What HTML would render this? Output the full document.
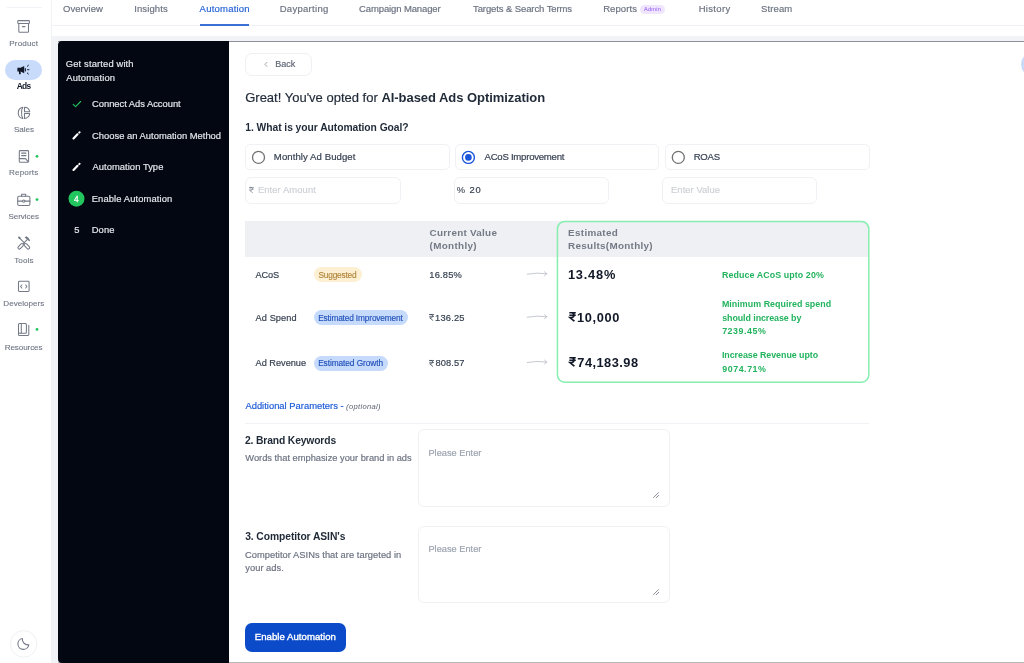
<!DOCTYPE html><html><head><meta charset="utf-8"><style>
*{margin:0;padding:0;box-sizing:border-box}
html,body{width:1024px;height:663px;overflow:hidden;background:#fff;font-family:"Liberation Sans",sans-serif}
.t{position:absolute;white-space:nowrap;line-height:1;-webkit-text-stroke-width:0.18px}
.b{position:absolute}
svg{position:absolute;overflow:visible}
#wrap{position:absolute;left:0;top:0;width:1024px;height:663px;will-change:transform;overflow:hidden}
</style></head><body><div id="wrap">
<div class="b" style="left:52px;top:36px;width:972.00px;height:627.00px;background:#f2f3f6"></div>
<div class="b" style="left:58px;top:41px;width:966.00px;height:622.00px;background:#fff"></div>
<div class="b" style="left:52px;top:25px;width:972.00px;height:1.00px;background:#eef1f5"></div>
<div class="b" style="left:51px;top:0px;width:1.00px;height:663.00px;background:#f1f2f5"></div>
<div class="b" style="left:58px;top:41px;width:966.00px;height:1.00px;background:#8d9097"></div>
<div class="b" style="left:58px;top:662px;width:966.00px;height:1.00px;background:#b5b7bb"></div>
<div class="b" style="left:58px;top:41px;width:171.00px;height:622.00px;background:#030712;border-radius:4px 0 0 4px"></div>
<div class="t" style="left:62.97px;top:4.00px;font-size:9.5px;color:#6b7280;letter-spacing:0.045px;">Overview</div>
<div class="t" style="left:134.25px;top:4.00px;font-size:9.5px;color:#6b7280;letter-spacing:0.094px;">Insights</div>
<div class="t" style="left:279.64px;top:4.00px;font-size:9.5px;color:#6b7280;letter-spacing:0.305px;">Dayparting</div>
<div class="t" style="left:359.02px;top:4.00px;font-size:9.5px;color:#6b7280;letter-spacing:-0.120px;">Campaign Manager</div>
<div class="t" style="left:473.01px;top:4.00px;font-size:9.5px;color:#6b7280;letter-spacing:-0.100px;">Targets &amp; Search Terms</div>
<div class="t" style="left:603.14px;top:4.00px;font-size:9.5px;color:#6b7280;letter-spacing:0.107px;">Reports</div>
<div class="t" style="left:698.64px;top:4.00px;font-size:9.5px;color:#6b7280;letter-spacing:0.336px;">History</div>
<div class="t" style="left:761.07px;top:4.00px;font-size:9.5px;color:#6b7280;letter-spacing:0.121px;">Stream</div>
<div class="t" style="left:199.60px;top:4.00px;font-size:9.5px;color:#2563d6;letter-spacing:0.216px;">Automation</div>
<div class="b" style="left:199.6px;top:23.5px;width:49.40px;height:2.00px;background:#3a6fd6"></div>
<div class="b" style="left:639.6px;top:4.5px;width:25.20px;height:9.00px;background:#efe6fd;border-radius:5px"></div>
<div class="t" style="left:644.00px;top:7.00px;font-size:5.6px;color:#8f4ff0;letter-spacing:0.247px;-webkit-text-stroke-width:0;">Admin</div>
<div class="b" style="left:7px;top:7.2px;width:35.00px;height:1.00px;background:#f0f2f5"></div>
<div class="b" style="left:5.3px;top:59.5px;width:37.00px;height:20.70px;background:#c8dbfb;border-radius:11px"></div>
<div class="t" style="left:9.35px;top:40.00px;font-size:8.1px;color:#6b7280;letter-spacing:0.131px;-webkit-text-stroke-width:0.1px;">Product</div>
<div class="t" style="left:13.94px;top:126.00px;font-size:8.1px;color:#6b7280;letter-spacing:-0.051px;-webkit-text-stroke-width:0.1px;">Sales</div>
<div class="t" style="left:9.05px;top:169.00px;font-size:8.1px;color:#6b7280;letter-spacing:0.147px;-webkit-text-stroke-width:0.1px;">Reports</div>
<div class="t" style="left:8.54px;top:213.00px;font-size:8.1px;color:#6b7280;letter-spacing:-0.088px;-webkit-text-stroke-width:0.1px;">Services</div>
<div class="t" style="left:14.14px;top:257.00px;font-size:8.1px;color:#6b7280;letter-spacing:0.108px;-webkit-text-stroke-width:0.1px;">Tools</div>
<div class="t" style="left:3.35px;top:300.00px;font-size:8.1px;color:#6b7280;letter-spacing:0.005px;-webkit-text-stroke-width:0.1px;">Developers</div>
<div class="t" style="left:4.75px;top:344.00px;font-size:8.1px;color:#6b7280;letter-spacing:-0.111px;-webkit-text-stroke-width:0.1px;">Resources</div>
<div class="t" style="left:16.69px;top:82.00px;font-size:8.4px;color:#111827;font-weight:700;-webkit-text-stroke-width:0;letter-spacing:-0.715px;">Ads</div>
<svg style="left:0;top:0" width="52" height="663" viewBox="0 0 52 663">
<g fill="none" stroke="#747a86" stroke-width="1.05" stroke-linejoin="round" stroke-linecap="round">
 <rect x="17.8" y="20.6" width="11.6" height="2.9" rx="0.7"/>
 <path d="M18.8 23.5V31.4Q18.8 32.3 19.7 32.3H27.6Q28.5 32.3 28.5 31.4V23.5"/>
 <path d="M22.4 26.6H25"/>
 <!-- sales -->
 <path d="M22.9 107.3A5.7 5.7 0 0 0 22.9 118.5Q21.4 116.5 21.6 112.9Q21.4 109.3 22.9 107.3Z"/>
 <path d="M24.5 107.3A5.5 5.5 0 0 1 29.7 111.7H24.5Z"/>
 <path d="M24.5 118.5A5.5 5.5 0 0 0 29.7 113.4H24.5Z"/>
 <!-- reports -->
 <path d="M20.1 150.6H27.8Q28.6 150.6 28.6 151.4V161.4L27.7 162.2H20.1Q19.3 162.2 19.3 161.4V151.4Q19.3 150.6 20.1 150.6Z"/>
 <path d="M21.6 153.1H26M21.6 155.6H26M19.3 158.6H25.4L28.4 161.8"/>
 <!-- services -->
 <rect x="17.7" y="196.3" width="12.2" height="9.2" rx="1.3"/>
 <path d="M21.6 196.3V194.3H25.7V196.3M17.7 201.1H30"/>
 <circle cx="23.7" cy="201.1" r="1.2" fill="#fff"/>
 <!-- developers -->
 <rect x="18.5" y="281.3" width="10.6" height="10.1" rx="0.9"/>
 <path d="M21.8 285L20.6 286.5L21.8 288M25.7 285L26.9 286.5L25.7 288"/>
 <!-- resources -->
 <rect x="18.5" y="323.5" width="7.9" height="9.7" rx="1"/>
 <path d="M21.3 323.7V333M28.8 325.3V334.6Q28.8 335.5 27.9 335.5H19.5Q18.5 335.5 18.5 334.4V332"/>
 <!-- tools -->
 <path d="M20.2 238.6L24.6 243.2M27.2 239.6L23 243.8"/>
 <rect x="23.6" y="244.9" width="6.6" height="2.8" rx="1.4" transform="rotate(45 26.9 246.3)"/>
 <rect x="17.4" y="244.9" width="6.6" height="2.8" rx="1.4" transform="rotate(-45 20.7 246.3)"/>
</g>
<ellipse cx="19.4" cy="237.8" rx="1.5" ry="1.1" transform="rotate(45 19.4 237.8)" fill="#747a86"/>
<path d="M24.6 237.6L26.2 236.2Q28.6 237.2 30.2 240.4L29.2 241.2Q27.4 239.6 24.6 237.6Z" fill="#747a86"/>
<!-- megaphone -->
<g fill="#111827">
 <path d="M17.4 67.7H20.6L24.2 65.9V73.3L20.6 71.6H17.4Z"/>
 <rect x="19" y="71" width="1.7" height="3.2"/>
 <rect x="24.8" y="67.9" width="1.1" height="3.7" rx="0.55"/>
</g>
<g stroke="#111827" stroke-width="1" stroke-linecap="round">
 <path d="M27.3 66.3L28.4 65.3M27.6 69.7H28.9M27.3 73L28.4 74"/>
</g>
<g fill="#22c55e">
 <circle cx="37" cy="156.3" r="1.4"/><circle cx="37" cy="199.6" r="1.4"/><circle cx="37" cy="329.4" r="1.4"/>
</g>
<circle cx="23.6" cy="643.9" r="13.3" fill="#fff" stroke="#eceef1" stroke-width="0.9"/>
<path d="M22.4 638.5A5.5 5.5 0 1 0 28.8 644.8A5.6 5.6 0 0 1 22.4 638.5Z" fill="none" stroke="#757b86" stroke-width="1.1" stroke-linejoin="round"/>
</svg>
<div class="t" style="left:65.83px;top:59.00px;font-size:9.4px;color:#e5e7eb;letter-spacing:0.139px;">Get started with</div>
<div class="t" style="left:66.30px;top:73.00px;font-size:9.4px;color:#e5e7eb;letter-spacing:0.139px;">Automation</div>
<div class="t" style="left:92.03px;top:99.00px;font-size:9.4px;color:#e5e7eb;letter-spacing:-0.024px;">Connect Ads Account</div>
<div class="t" style="left:92.03px;top:131.00px;font-size:9.4px;color:#e5e7eb;letter-spacing:0.012px;">Choose an Automation Method</div>
<div class="t" style="left:92.50px;top:162.00px;font-size:9.4px;color:#e5e7eb;letter-spacing:0.047px;">Automation Type</div>
<div class="t" style="left:91.75px;top:194.00px;font-size:9.4px;color:#e5e7eb;letter-spacing:0.109px;">Enable Automation</div>
<div class="t" style="left:91.75px;top:225.00px;font-size:9.4px;color:#e5e7eb;letter-spacing:0.103px;">Done</div>
<svg style="left:0;top:0" width="229" height="663" viewBox="0 0 229 663">
<path d="M73.2 104.3L75.6 106.6L80.6 101.5" fill="none" stroke="#22c55e" stroke-width="1.1" stroke-linecap="round" stroke-linejoin="round"/>
<g stroke="#fff" stroke-linecap="round" fill="none">
<path d="M73.5 138.4L77.5 134.3" stroke-width="2.2"/>
<path d="M79.2 132.6L79.6 132.2" stroke-width="2"/>
<path d="M73.5 169.9L77.5 165.8" stroke-width="2.2"/>
<path d="M79.2 164.1L79.6 163.7" stroke-width="2"/>
</g>
<circle cx="76.5" cy="198.7" r="8" fill="#22c55e"/>
</svg>
<div class="t" style="left:74.03px;top:195.00px;font-size:8.4px;color:#fff;-webkit-text-stroke-width:0.3px;">4</div>
<div class="t" style="left:74.22px;top:225.00px;font-size:9.4px;color:#e5e7eb;">5</div>
<div class="b" style="left:245px;top:52.5px;width:66.50px;height:23.00px;border:1px solid #eef0f3;border-radius:7px"></div>
<svg style="left:0;top:0" width="1024" height="663"><path d="M267.2 62L265 64.4L267.2 66.8" fill="none" stroke="#8a909a" stroke-width="0.8"/></svg>
<div class="t" style="left:275.28px;top:60.00px;font-size:9px;color:#5f6673;letter-spacing:0.032px;">Back</div>
<div class="t" style="left:245.20px;top:91.00px;font-size:13px;color:#1f2937;letter-spacing:0.000px;">Great! You've opted for <b style="font-weight:700;letter-spacing:-0.05px;-webkit-text-stroke-width:0">AI-based Ads Optimization</b></div>
<div class="t" style="left:245.28px;top:123.00px;font-size:10.3px;color:#1f2937;font-weight:700;-webkit-text-stroke-width:0;letter-spacing:-0.052px;">1. What is your Automation Goal?</div>
<div class="b" style="left:245.4px;top:143.6px;width:204.30px;height:26.90px;border:1px solid #f0f1f4;border-radius:5px"></div>
<div class="b" style="left:454.9px;top:143.6px;width:204.50px;height:26.90px;border:1px solid #f0f1f4;border-radius:5px"></div>
<div class="b" style="left:665.3px;top:143.6px;width:204.40px;height:26.90px;border:1px solid #f0f1f4;border-radius:5px"></div>
<svg style="left:0;top:0" width="1024" height="663" viewBox="0 0 1024 663">
<circle cx="258.5" cy="157.4" r="6" fill="none" stroke="#727272" stroke-width="1.3"/>
<circle cx="678.3" cy="157.4" r="6" fill="none" stroke="#727272" stroke-width="1.3"/>
<circle cx="468.4" cy="157.4" r="6" fill="none" stroke="#1a56db" stroke-width="1.4"/>
<circle cx="468.4" cy="157.4" r="3.3" fill="#1a56db"/>
</svg>
<div class="t" style="left:273.83px;top:152.00px;font-size:9.6px;color:#374151;letter-spacing:0.067px;">Monthly Ad Budget</div>
<div class="t" style="left:484.50px;top:152.00px;font-size:9.6px;color:#374151;letter-spacing:-0.254px;">ACoS Improvement</div>
<div class="t" style="left:693.73px;top:152.00px;font-size:9.6px;color:#374151;letter-spacing:-0.289px;">ROAS</div>
<div class="b" style="left:245.4px;top:176.5px;width:155.20px;height:27.50px;border:1px solid #f0f1f4;border-radius:6px"></div>
<div class="b" style="left:453.5px;top:176.5px;width:155.50px;height:27.50px;border:1px solid #f0f1f4;border-radius:6px"></div>
<div class="b" style="left:662.4px;top:176.5px;width:154.90px;height:27.50px;border:1px solid #f0f1f4;border-radius:6px"></div>
<svg style="left:249.00px;top:187.10px" width="5.00" height="6.10" viewBox="0 0 6 10" preserveAspectRatio="none"><path d="M0.3 0.7H5.8M0.3 3.4H5.8M0.6 0.7H2.2C4.9 0.7 4.9 5.6 2.2 5.6H0.8L4.6 9.6" fill="none" stroke="#6b7280" stroke-width="0.9" stroke-linejoin="miter"/></svg>
<div class="t" style="left:257.95px;top:185.00px;font-size:9.4px;color:#cdd1d6;letter-spacing:0.098px;">Enter Amount</div>
<div class="t" style="left:456.87px;top:185.00px;font-size:9.4px;color:#4b5563;">%</div>
<div class="t" style="left:469.43px;top:185.00px;font-size:9.4px;color:#374151;letter-spacing:0.865px;">20</div>
<div class="t" style="left:671.05px;top:185.00px;font-size:9.4px;color:#cdd1d6;letter-spacing:0.056px;">Enter Value</div>
<div class="b" style="left:245px;top:221px;width:315.00px;height:36.00px;background:#eff0f3"></div>
<div class="b" style="left:557.2px;top:221px;width:312.30px;height:162.00px;border-radius:8px;background:linear-gradient(#eff0f3 0,#eff0f3 36px,#fff 36px)"></div>
<svg style="left:0;top:0" width="1024" height="663"><rect x="557.45" y="221.5" width="311.35" height="160.7" rx="7.2" fill="none" stroke="#86eeb0" stroke-width="1.5"/></svg>
<div class="t" style="left:429.60px;top:228.00px;font-size:9.9px;color:#737a86;font-weight:700;-webkit-text-stroke-width:0;letter-spacing:0.258px;">Current Value</div>
<div class="t" style="left:429.50px;top:241.00px;font-size:9.9px;color:#737a86;font-weight:700;-webkit-text-stroke-width:0;letter-spacing:0.342px;">(Monthly)</div>
<div class="t" style="left:568.06px;top:228.00px;font-size:9.9px;color:#737a86;font-weight:700;-webkit-text-stroke-width:0;letter-spacing:0.321px;">Estimated</div>
<div class="t" style="left:568.06px;top:241.00px;font-size:9.9px;color:#737a86;font-weight:700;-webkit-text-stroke-width:0;letter-spacing:0.300px;">Results(Monthly)</div>
<div class="t" style="left:255.60px;top:271.00px;font-size:9.2px;color:#374151;letter-spacing:-0.133px;">ACoS</div>
<div class="b" style="left:313.6px;top:266.90000000000003px;width:48.30px;height:15.40px;background:#fdf0d2;border-radius:8px"></div>
<div class="t" style="left:318.43px;top:271.00px;font-size:8.3px;color:#b0843c;letter-spacing:-0.183px;-webkit-text-stroke-width:0.14px;">Suggested</div>
<div class="t" style="left:255.60px;top:314.00px;font-size:9.2px;color:#374151;letter-spacing:0.087px;">Ad Spend</div>
<div class="b" style="left:313.6px;top:310.1px;width:94.50px;height:15.40px;background:#c6dafc;border-radius:8px"></div>
<div class="t" style="left:318.14px;top:314.00px;font-size:8.3px;color:#1e4fb8;letter-spacing:-0.145px;-webkit-text-stroke-width:0.14px;">Estimated Improvement</div>
<div class="t" style="left:255.60px;top:359.00px;font-size:9.2px;color:#374151;letter-spacing:-0.015px;">Ad Revenue</div>
<div class="b" style="left:313.6px;top:355.6px;width:74.70px;height:15.40px;background:#c6dafc;border-radius:8px"></div>
<div class="t" style="left:318.14px;top:359.00px;font-size:8.3px;color:#1e4fb8;letter-spacing:-0.069px;-webkit-text-stroke-width:0.14px;">Estimated Growth</div>
<div class="t" style="left:429.30px;top:271.00px;font-size:9.3px;color:#374151;letter-spacing:0.210px;">16.85%</div>
<svg style="left:429.20px;top:314.00px" width="5.20" height="6.80" viewBox="0 0 6 10" preserveAspectRatio="none"><path d="M0.3 0.7H5.8M0.3 3.4H5.8M0.6 0.7H2.2C4.9 0.7 4.9 5.6 2.2 5.6H0.8L4.6 9.6" fill="none" stroke="#374151" stroke-width="1.0" stroke-linejoin="miter"/></svg>
<div class="t" style="left:435.10px;top:314.00px;font-size:9.3px;color:#374151;letter-spacing:0.182px;">136.25</div>
<svg style="left:429.20px;top:359.70px" width="5.20" height="6.80" viewBox="0 0 6 10" preserveAspectRatio="none"><path d="M0.3 0.7H5.8M0.3 3.4H5.8M0.6 0.7H2.2C4.9 0.7 4.9 5.6 2.2 5.6H0.8L4.6 9.6" fill="none" stroke="#374151" stroke-width="1.0" stroke-linejoin="miter"/></svg>
<div class="t" style="left:435.38px;top:359.00px;font-size:9.3px;color:#374151;letter-spacing:0.145px;">808.57</div>
<svg style="left:0;top:0" width="1024" height="663" viewBox="0 0 1024 663">
<g fill="none" stroke="#aeb3ba" stroke-width="0.7" stroke-linecap="round" stroke-linejoin="round">
<path d="M527.2 274.2Q537 272.2 546.8 273.8M544.5 271.8L546.8 273.8L544.5 275.6"/>
<path d="M527.2 317.2Q537 315.2 546.8 316.8M544.5 314.8L546.8 316.8L544.5 318.6"/>
<path d="M527.2 362.5Q537 360.5 546.8 362.1M544.5 360.1L546.8 362.1L544.5 363.9"/>
</g></svg>
<div class="t" style="left:567.93px;top:269.00px;font-size:12.8px;color:#111827;font-weight:700;-webkit-text-stroke-width:0;letter-spacing:0.786px;">13.48%</div>
<svg style="left:569.00px;top:312.10px" width="7.00" height="9.70" viewBox="0 0 6 10" preserveAspectRatio="none"><path d="M0.3 0.7H5.8M0.3 3.4H5.8M0.6 0.7H2.2C4.9 0.7 4.9 5.6 2.2 5.6H0.8L4.6 9.6" fill="none" stroke="#111827" stroke-width="1.6" stroke-linejoin="miter"/></svg>
<div class="t" style="left:577.03px;top:312.00px;font-size:12.8px;color:#111827;font-weight:700;-webkit-text-stroke-width:0;letter-spacing:0.622px;">10,000</div>
<svg style="left:569.00px;top:357.30px" width="7.00" height="9.70" viewBox="0 0 6 10" preserveAspectRatio="none"><path d="M0.3 0.7H5.8M0.3 3.4H5.8M0.6 0.7H2.2C4.9 0.7 4.9 5.6 2.2 5.6H0.8L4.6 9.6" fill="none" stroke="#111827" stroke-width="1.6" stroke-linejoin="miter"/></svg>
<div class="t" style="left:577.29px;top:357.00px;font-size:12.8px;color:#111827;font-weight:700;-webkit-text-stroke-width:0;letter-spacing:0.479px;">74,183.98</div>
<div class="t" style="left:721.92px;top:271.00px;font-size:8.9px;color:#22b35e;font-weight:700;-webkit-text-stroke-width:0;letter-spacing:0.086px;">Reduce ACoS upto 20%</div>
<div class="t" style="left:721.92px;top:300.00px;font-size:8.9px;color:#22b35e;font-weight:700;-webkit-text-stroke-width:0;letter-spacing:0.038px;">Minimum Required spend</div>
<div class="t" style="left:722.19px;top:314.00px;font-size:8.9px;color:#22b35e;font-weight:700;-webkit-text-stroke-width:0;letter-spacing:-0.069px;">should increase by</div>
<div class="t" style="left:722.14px;top:327.00px;font-size:8.9px;color:#22b35e;font-weight:700;-webkit-text-stroke-width:0;letter-spacing:0.555px;">7239.45%</div>
<div class="t" style="left:721.92px;top:351.00px;font-size:8.9px;color:#22b35e;font-weight:700;-webkit-text-stroke-width:0;letter-spacing:-0.046px;">Increase Revenue upto</div>
<div class="t" style="left:722.19px;top:365.00px;font-size:8.9px;color:#22b35e;font-weight:700;-webkit-text-stroke-width:0;letter-spacing:0.548px;">9074.71%</div>
<div class="t" style="left:245.40px;top:401.00px;font-size:9.4px;color:#1d5bd8;letter-spacing:0.013px;">Additional Parameters -</div>
<div class="t" style="left:346.06px;top:403.00px;font-size:7.6px;color:#5b6370;letter-spacing:0.323px;font-style:italic;-webkit-text-stroke-width:0;">(optional)</div>
<div class="b" style="left:245px;top:422.8px;width:624.00px;height:1.00px;background:#f1f2f5"></div>
<div class="t" style="left:245.04px;top:436.00px;font-size:10.3px;color:#1f2937;font-weight:700;-webkit-text-stroke-width:0;letter-spacing:-0.137px;">2. Brand Keywords</div>
<div class="t" style="left:245.35px;top:454.00px;font-size:9.3px;color:#6b7280;letter-spacing:-0.011px;">Words that emphasize your brand in ads</div>
<div class="t" style="left:245.14px;top:532.00px;font-size:10.3px;color:#1f2937;font-weight:700;-webkit-text-stroke-width:0;letter-spacing:-0.073px;">3. Competitor ASIN's</div>
<div class="t" style="left:244.94px;top:551.00px;font-size:9.3px;color:#6b7280;letter-spacing:0.050px;">Competitor ASINs that are targeted in</div>
<div class="t" style="left:245.35px;top:564.00px;font-size:9.3px;color:#6b7280;letter-spacing:0.020px;">your ads.</div>
<div class="b" style="left:418.4px;top:429px;width:252.10px;height:77.60px;border:1px solid #f0f1f4;border-radius:6px"></div>
<div class="t" style="left:428.46px;top:449.00px;font-size:9.2px;color:#9ca3af;letter-spacing:0.028px;">Please Enter</div>
<div class="b" style="left:418.4px;top:526.2px;width:252.10px;height:76.80px;border:1px solid #f0f1f4;border-radius:6px"></div>
<div class="t" style="left:428.46px;top:545.00px;font-size:9.2px;color:#9ca3af;letter-spacing:0.028px;">Please Enter</div>
<svg style="left:0;top:0" width="1024" height="663" viewBox="0 0 1024 663">
<g stroke="#6b7280" stroke-width="0.8" stroke-linecap="round">
<path d="M653.5 497.6L658.5 492.6M656.2 497.8L658.7 495.3"/>
<path d="M653.5 594.6L658.5 589.6M656.2 594.8L658.7 592.3"/>
</g>
<circle cx="1033.2" cy="64.2" r="12.2" fill="#c8dbfb"/>
</svg>
<div class="b" style="left:244.8px;top:622.6px;width:101.20px;height:29.30px;background:#0b4bc9;border-radius:7px"></div>
<div class="t" style="left:254.83px;top:632.00px;font-size:9.6px;color:#fff;letter-spacing:0.031px;-webkit-text-stroke-width:0.35px;">Enable Automation</div>
</div></body></html>
